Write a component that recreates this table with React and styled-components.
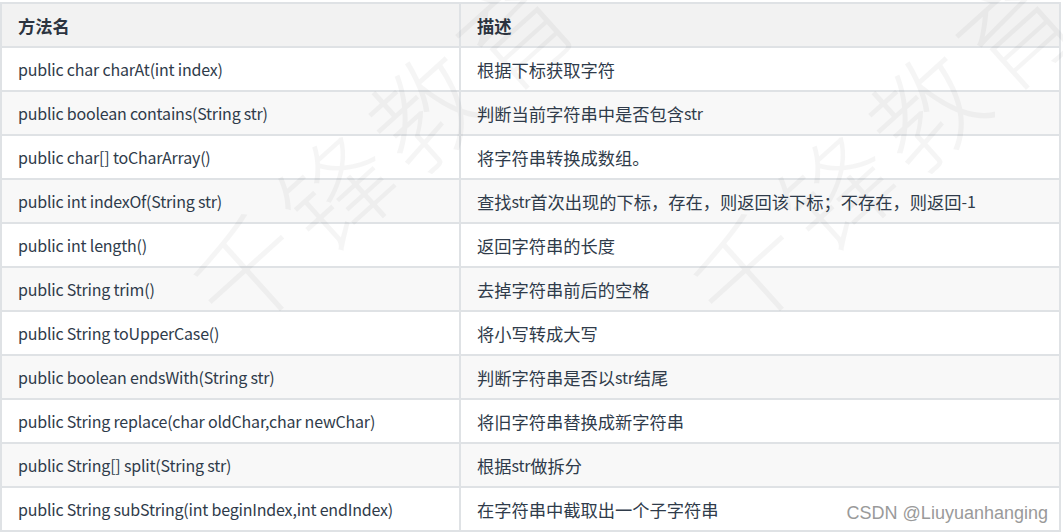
import React from "react";
import styled, { createGlobalStyle } from "styled-components";

const Global = createGlobalStyle`
  html, body { margin: 0; padding: 0; background: #fff; }
  body { font-family: "Noto Sans CJK SC", "Noto Sans", sans-serif; }
`;

const Page = styled.div`
  position: relative;
  width: 1063px;
  height: 532px;
  overflow: hidden;
  padding-top: 2px;
  box-sizing: border-box;
`;

const Table = styled.div`
  display: grid;
  grid-template-columns: 459px 600px;
  width: 1061px;
  border-top: 2px solid #dfe2e5;
  border-left: 2px solid #dfe2e5;
  box-sizing: border-box;
`;

const Cell = styled.div`
  height: 44px;
  box-sizing: border-box;
  border-right: 2px solid #dfe2e5;
  border-bottom: 2px solid #dfe2e5;
  display: flex;
  align-items: center;
  padding-left: 16px;
  font-size: 16px;
  color: ${(p) => (p.$head ? "#2c3440" : "#2f3b4a")};
  font-weight: ${(p) => (p.$head ? 700 : 400)};
  background: ${(p) => (p.$head ? "#f2f2f2" : p.$alt ? "#f8f8f8" : "#fff")};
  white-space: nowrap;
  letter-spacing: -0.2px;
`;

const Han = styled.span`
  font-size: 17.25px;
  letter-spacing: 0;
`;

const Watermark = styled.div`
  position: absolute;
  left: ${(p) => p.$x}px;
  top: ${(p) => p.$y}px;
  font-size: 110px;
  font-family: "Noto Sans CJK SC", sans-serif;
  font-weight: 300;
  color: rgba(0, 0, 0, 0.04);
  transform: rotate(-42deg);
  transform-origin: left top;
  white-space: nowrap;
  pointer-events: none;
  letter-spacing: 10px;
`;

const Credit = styled.div`
  position: absolute;
  right: 15px;
  bottom: 8px;
  font-family: "Liberation Sans", Arial, sans-serif;
  font-size: 18px;
  color: #9a9a9a;
  text-shadow: 0 0 2px #fff, 0 0 2px #fff;
  pointer-events: none;
`;

const rows = [
  ["public char charAt(int index)", "根据下标获取字符"],
  ["public boolean contains(String str)", "判断当前字符串中是否包含str"],
  ["public char[] toCharArray()", "将字符串转换成数组。"],
  ["public int indexOf(String str)", "查找str首次出现的下标，存在，则返回该下标；不存在，则返回-1"],
  ["public int length()", "返回字符串的长度"],
  ["public String trim()", "去掉字符串前后的空格"],
  ["public String toUpperCase()", "将小写转成大写"],
  ["public boolean endsWith(String str)", "判断字符串是否以str结尾"],
  ["public String replace(char oldChar,char newChar)", "将旧字符串替换成新字符串"],
  ["public String[] split(String str)", "根据str做拆分"],
  ["public String subString(int beginIndex,int endIndex)", "在字符串中截取出一个子字符串"],
];

const HAN = /([\u3000-\u303f\u4e00-\u9fff\uff00-\uffef]+)/;

function Mixed({ text }) {
  return text
    .split(HAN)
    .filter(Boolean)
    .map((part, i) => (HAN.test(part) ? <Han key={i}>{part}</Han> : <span key={i}>{part}</span>));
}

export default function App() {
  return (
    <Page>
      <Global />
      <Table>
        <Cell $head><Mixed text="方法名" /></Cell>
        <Cell $head><Mixed text="描述" /></Cell>
        {rows.map(([a, b], i) => (
          <React.Fragment key={i}>
            <Cell $alt={i % 2 === 1}>{a}</Cell>
            <Cell $alt={i % 2 === 1}><Mixed text={b} /></Cell>
          </React.Fragment>
        ))}
      </Table>
      <Watermark $x={150} $y={245}>千锋教育</Watermark>
      <Watermark $x={650} $y={245}>千锋教育</Watermark>
      <Credit>CSDN @Liuyuanhanging</Credit>
    </Page>
  );
}
